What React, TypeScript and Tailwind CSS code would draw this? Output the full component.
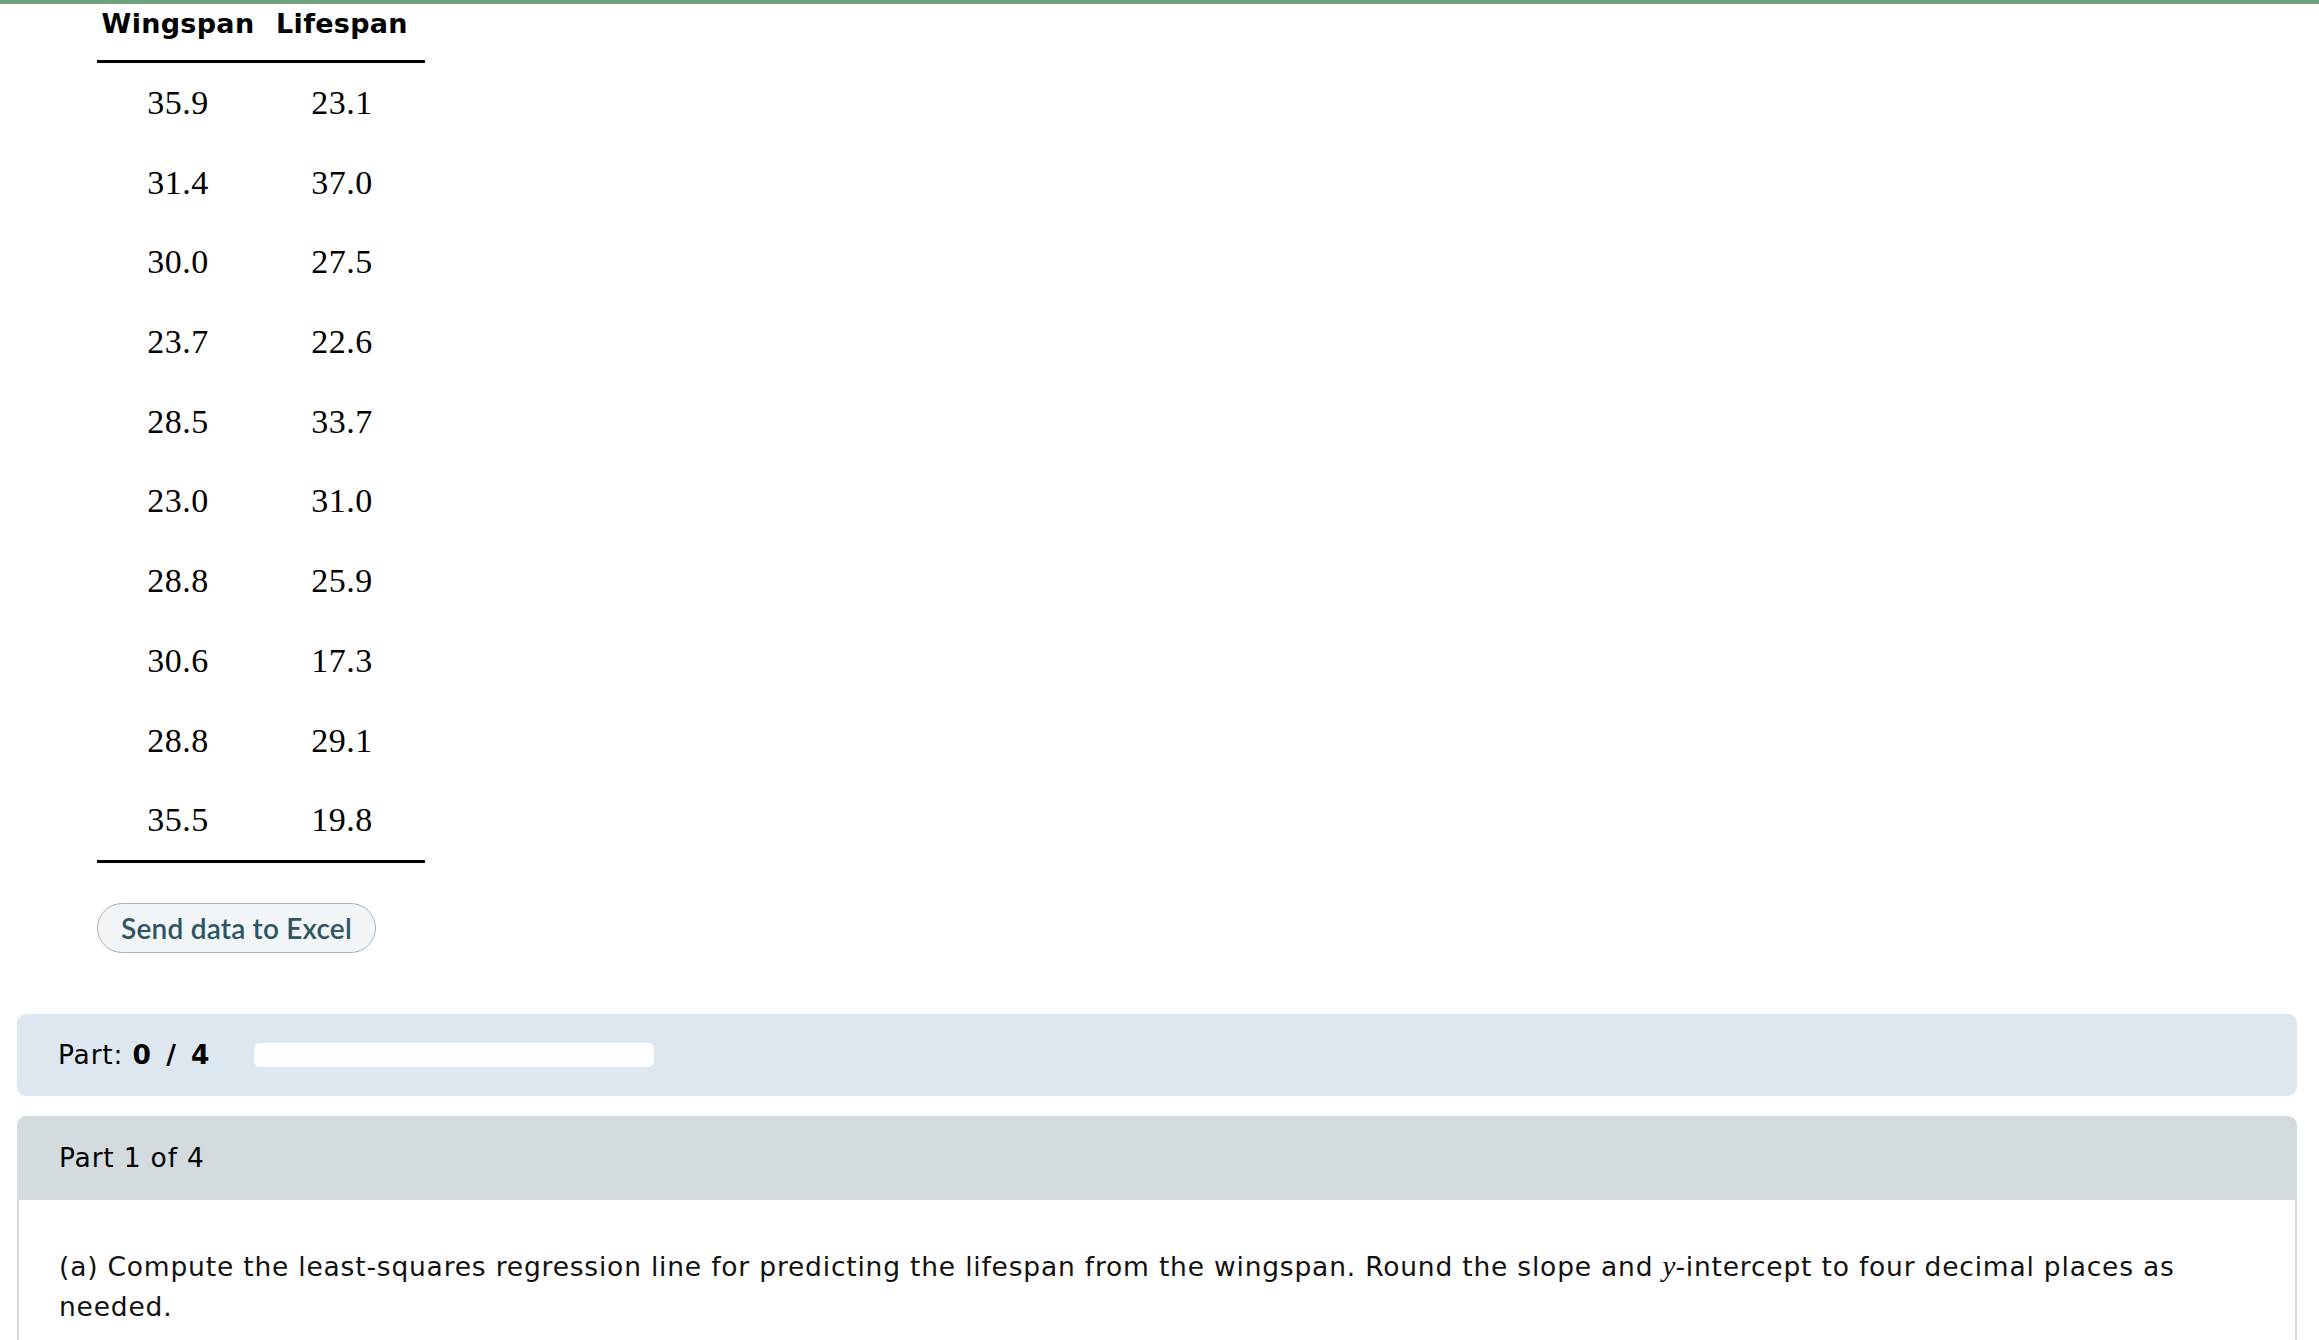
import React from "react";

const ROWS: [string, string][] = [
  ["35.9", "23.1"],
  ["31.4", "37.0"],
  ["30.0", "27.5"],
  ["23.7", "22.6"],
  ["28.5", "33.7"],
  ["23.0", "31.0"],
  ["28.8", "25.9"],
  ["30.6", "17.3"],
  ["28.8", "29.1"],
  ["35.5", "19.8"],
];

const verdana = "font-['DejaVu_Sans',Verdana,sans-serif]";

export default function App() {
  return (
    <div className="min-h-[1340px] w-full bg-white text-black">
      <div className="h-[4px] w-full bg-[#6fa37b]" />

      <div className="pl-[17px] pr-[22px] pt-[4px]">
        {/* data table */}
        <div className="ml-[80px] w-[328px]">
          <div className={`grid grid-cols-[162px_166px] h-[52px] ${verdana} text-[27px] font-bold leading-[32px] tracking-[0.3px]`}>
            <div className="text-center">Wingspan</div>
            <div className="text-center">Lifespan</div>
          </div>
          <div className="h-[3px] bg-black" />
          <div className="font-['Liberation_Serif','Times_New_Roman',serif] text-[34px]">
            {ROWS.map(([w, l], i) => (
              <div key={i} className="grid grid-cols-[162px_166px] h-[79.7px] items-center leading-[79.7px]">
                <div className="text-center tracking-[0.5px]">{w}</div>
                <div className="text-center tracking-[0.5px]">{l}</div>
              </div>
            ))}
          </div>
          <div className="h-[3px] bg-black" />
        </div>

        <button
          type="button"
          className="mt-[40px] ml-[80px] h-[50px] w-[279px] rounded-full border-[1.5px] border-[#a3b3bb] bg-[#f2f5f7] font-['Lato',sans-serif] text-[28px] font-semibold leading-none tracking-[0.2px] text-[#2e5563]"
        >
          Send data to Excel
        </button>

        {/* progress */}
        <div className={`mt-[61px] flex h-[82px] items-center rounded-[9px] bg-[#dde7ef] pl-[41px] ${verdana} text-[26.5px]`}>
          <div className="w-[196px] tracking-[0.8px]">
            Part: <span className="font-bold tracking-[1px]">0 <span className="mx-[4px]">/</span> 4</span>
          </div>
          <div className="h-[24px] w-[400px] rounded-[6px] bg-white" />
        </div>

        {/* part 1 */}
        <div className={`mt-[20px] ${verdana} text-[26.5px] tracking-[0.8px]`}>
          <div className="flex h-[84px] items-center rounded-t-[9px] bg-[#d3dbdf] pl-[42px]">
            Part 1 of 4
          </div>
          <div className="border-x-2 border-[#d3dbdf] px-[40px] pt-[46px] pb-[40px] leading-[40px] text-[#111]">
            <div className="whitespace-nowrap">
              (a) Compute the least-squares regression line for predicting the lifespan from the wingspan. Round the slope and{" "}
              <i className="font-['Liberation_Serif','Times_New_Roman',serif] text-[29px] tracking-normal">y</i>-intercept to four decimal places as
            </div>
            <div>needed.</div>
          </div>
        </div>
      </div>
    </div>
  );
}
